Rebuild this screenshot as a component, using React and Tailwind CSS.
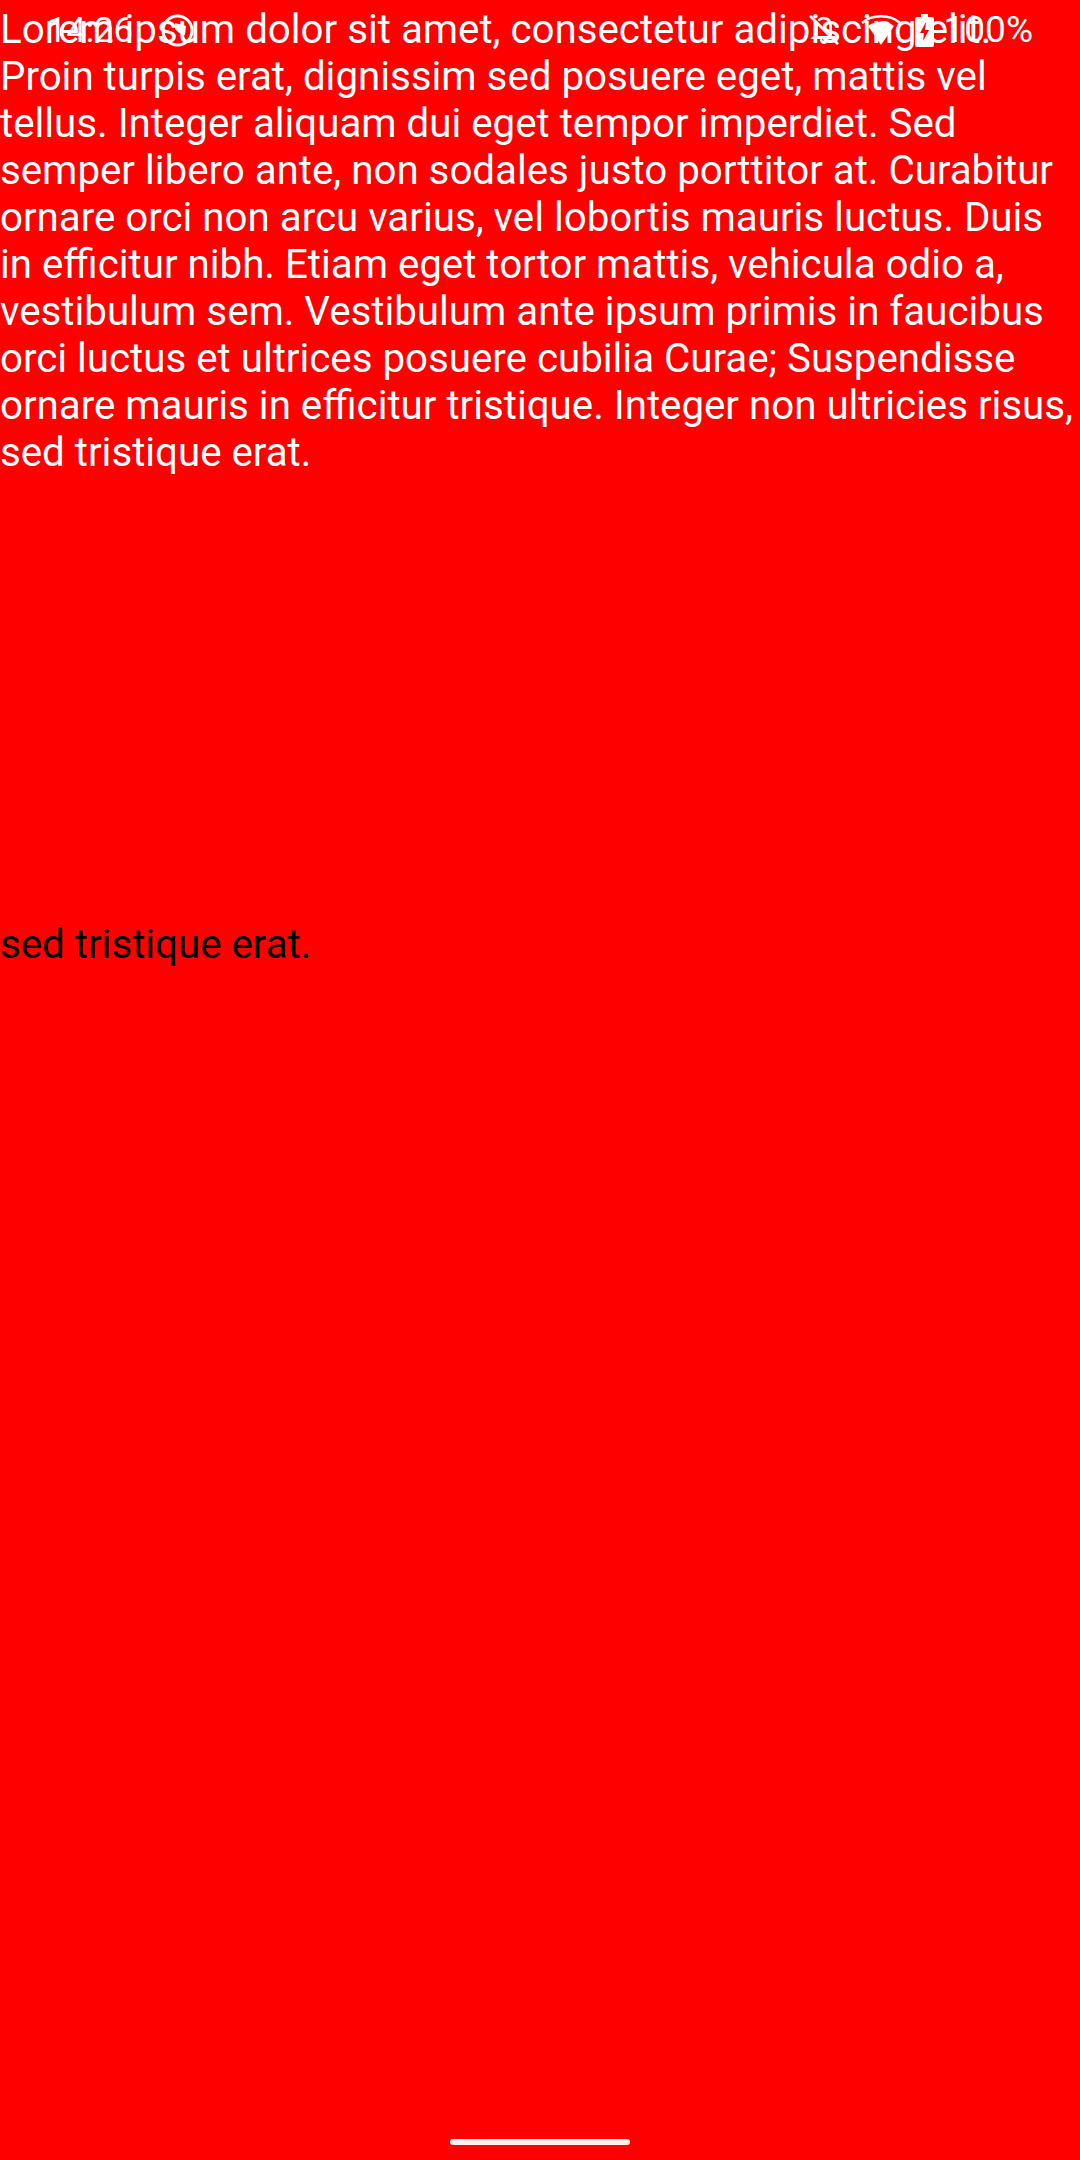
import React from 'react';

const lorem = 'Lorem ipsum dolor sit amet, consectetur adipiscing elit. Proin turpis erat, dignissim sed posuere eget, mattis vel tellus. Integer aliquam dui eget tempor imperdiet. Sed semper libero ante, non sodales justo porttitor at. Curabitur ornare orci non arcu varius, vel lobortis mauris luctus. Duis in efficitur nibh. Etiam eget tortor mattis, vehicula odio a, vestibulum sem. Vestibulum ante ipsum primis in faucibus orci luctus et ultrices posuere cubilia Curae; Suspendisse ornare mauris in efficitur tristique. Integer non ultricies risus, sed tristique erat.';

function StatusBar() {
  return (
    <div className="absolute top-0 left-0 w-full h-[60px] flex items-center justify-between pl-[47px] pr-[47px] text-white text-[34.5px] leading-[40px]">
      <div className="flex items-center gap-[28px]">
        <span>14:26</span>
        {/* circled glyph */}
        <svg width="33" height="33" viewBox="0 0 33 33" fill="none">
          <circle cx="16.5" cy="16.5" r="14.5" stroke="white" strokeWidth="3" />
          <path d="M14 9l11 3-1 9-6-2-4-4z" fill="white" />
        </svg>
      </div>
      <div className="flex items-center">
        {/* bell off */}
        <svg width="32" height="32" viewBox="0 0 34 34" fill="none" stroke="white" strokeWidth="3" strokeLinecap="round">
          <path d="M3 3l28 28" />
          <path d="M12 6c3-2 5-2 7-1 4 1 5 5 5 8v9M9 11v11l-3 3h22M14 28c1 3 5 3 6 0" />
        </svg>
        {/* wifi */}
        <svg width="40" height="32" viewBox="0 0 40 32" className="ml-[21px]">
          <path d="M1 9C11 0 29 0 39 9" fill="none" stroke="white" strokeWidth="2.5" />
          <path d="M7 12c8-6 18-6 26 0L20 31z" fill="white" />
        </svg>
        {/* charging battery */}
        <svg width="19" height="33" viewBox="0 0 19 33" className="ml-[14px]">
          <path d="M6 0h7v3h4a2 2 0 0 1 2 2v26a2 2 0 0 1-2 2H2a2 2 0 0 1-2-2V5a2 2 0 0 1 2-2h4z" fill="white" />
          <path d="M11 8l-6 11h4l-1 8 6-11h-4z" fill="#ff0000" />
        </svg>
        <span className="ml-[10px] text-[37px]">100%</span>
      </div>
    </div>
  );
}

export default function App() {
  return (
    <div className="relative w-[1080px] h-[2160px] overflow-hidden bg-[#ff0000] pt-[6px] font-['Roboto',sans-serif] text-[40.25px] leading-[47px]">
      <p className="text-white">{lorem}</p>
      <p className="mt-[445px] text-black">sed tristique erat.</p>
      <StatusBar />
      <div className="absolute bottom-[15px] left-1/2 -translate-x-1/2 w-[180px] h-[6px] rounded-full bg-[#ffeeee]" />
    </div>
  );
}
